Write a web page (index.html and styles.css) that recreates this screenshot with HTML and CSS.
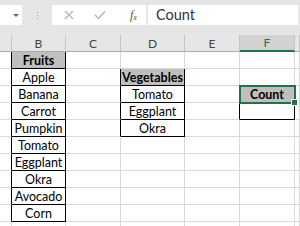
FILE: index.html
```html
<!DOCTYPE html>
<html lang="en">
<head>
    <meta charset="UTF-8">
    <title>Count</title>
    <link rel="stylesheet" href="styles.css">
</head>
<body>
    <div class="formula-bar">
        <div class="name-box"><span class="arrow"></span></div>
        <div class="grip"><i></i><i></i><i></i></div>
        <div class="fx-box">
            <svg class="ico" width="10" height="10" viewBox="0 0 10 10"><path d="M1 1 L9 9 M9 1 L1 9" stroke="#b3b3b3" stroke-width="1.3" fill="none"/></svg>
            <svg class="ico" width="12" height="10" viewBox="0 0 12 10"><path d="M1 5 L4.5 8.5 L11 1.5" stroke="#b3b3b3" stroke-width="1.4" fill="none"/></svg>
            <span class="fx">f<sub>x</sub></span>
        </div>
        <div class="formula">Count</div>
    </div>

    <table class="sheet">
        <tr class="head">
            <th class="w-a"></th>
            <th class="w-b">B</th>
            <th class="w-c">C</th>
            <th class="w-d">D</th>
            <th class="w-e">E</th>
            <th class="w-f active">F</th>
            <th class="w-g"></th>
        </tr>
        <tr>
            <td class="r"></td>
            <td class="r b title">Fruits</td>
            <td></td>
            <td></td>
            <td></td>
            <td></td>
            <td></td>
        </tr>
        <tr>
            <td class="r"></td>
            <td class="r b">Apple</td>
            <td class="r"></td>
            <td class="r b title">Vegetables</td>
            <td></td>
            <td class="b"></td>
            <td></td>
        </tr>
        <tr>
            <td class="r"></td>
            <td class="r b">Banana</td>
            <td class="r"></td>
            <td class="r b">Tomato</td>
            <td class="r"></td>
            <td class="r b title sel">Count</td>
            <td></td>
        </tr>
        <tr>
            <td class="r"></td>
            <td class="r b">Carrot</td>
            <td class="r"></td>
            <td class="r b">Eggplant</td>
            <td class="r"></td>
            <td class="r b"></td>
            <td></td>
        </tr>
        <tr>
            <td class="r"></td>
            <td class="r b">Pumpkin</td>
            <td class="r"></td>
            <td class="r b">Okra</td>
            <td></td>
            <td></td>
            <td></td>
        </tr>
        <tr>
            <td class="r"></td>
            <td class="r b">Tomato</td>
            <td></td>
            <td></td>
            <td></td>
            <td></td>
            <td></td>
        </tr>
        <tr>
            <td class="r"></td>
            <td class="r b">Eggplant</td>
            <td></td>
            <td></td>
            <td></td>
            <td></td>
            <td></td>
        </tr>
        <tr>
            <td class="r"></td>
            <td class="r b">Okra</td>
            <td></td>
            <td></td>
            <td></td>
            <td></td>
            <td></td>
        </tr>
        <tr>
            <td class="r"></td>
            <td class="r b">Avocado</td>
            <td></td>
            <td></td>
            <td></td>
            <td></td>
            <td></td>
        </tr>
        <tr>
            <td class="r"></td>
            <td class="r b">Corn</td>
            <td></td>
            <td></td>
            <td></td>
            <td></td>
            <td></td>
        </tr>
        <tr>
            <td></td>
            <td></td>
            <td></td>
            <td></td>
            <td></td>
            <td></td>
            <td></td>
        </tr>
    </table>
</body>
</html>
```

FILE: styles.css
```css
body {
    margin: 0;
    width: 300px;
    height: 226px;
    overflow: hidden;
    background: #fff;
    font-family: Lato, "Liberation Sans", sans-serif;
}

.formula-bar {
    height: 35px;
    background: #e6e6e6;
    display: flex;
    align-items: flex-start;
    padding-top: 5px;
    box-sizing: border-box;
}

.name-box {
    width: 22px;
    height: 20px;
    background: #fff;
    position: relative;
    display: flex;
    align-items: center;
    justify-content: flex-end;
    padding-right: 3px;
    box-sizing: border-box;
}

.arrow {
    width: 0;
    height: 0;
    border-left: 3px solid transparent;
    border-right: 3px solid transparent;
    border-top: 3px solid #666;
}

.grip {
    width: 30px;
    height: 20px;
    display: flex;
    flex-direction: column;
    align-items: center;
    justify-content: center;
    gap: 2px;
}

.grip i {
    width: 1px;
    height: 1px;
    background: #9a9a9a;
}

.fx-box {
    width: 94px;
    height: 20px;
    background: #fff;
    display: flex;
    align-items: center;
    padding-left: 12px;
    gap: 20px;
    box-sizing: border-box;
}

.fx {
    font-family: "Liberation Serif", serif;
    font-style: italic;
    font-size: 12px;
    color: #555;
    margin-left: 4px;
}

.fx sub {
    font-size: 8px;
    vertical-align: -1px;
}

.formula {
    margin-left: 2px;
    width: 150px;
    height: 20px;
    background: #fff;
    font-size: 14.5px;
    color: #333;
    line-height: 20px;
    padding-left: 8px;
    box-sizing: border-box;
}

.sheet {
    border-collapse: separate;
    border-spacing: 0;
    table-layout: fixed;
    width: 300px;
}

.sheet th,
.sheet td {
    box-sizing: border-box;
    padding: 0;
    border-right: 1px solid #d9d9d9;
    border-bottom: 1px solid #d9d9d9;
    text-align: center;
    white-space: nowrap;
    overflow: hidden;
}

.sheet th {
    height: 16px;
    background: #e6e6e6;
    border-right-color: #c4c4c4;
    border-bottom-color: #ababab;
    font-weight: normal;
    font-size: 12px;
    color: #444;
}

.sheet th.active {
    background: #d2d2d2;
    color: #217346;
    border-bottom: 2px solid #217346;
}

.w-a { width: 12px; }
.w-b { width: 54px; }
.w-c { width: 55px; }
.w-d { width: 64px; }
.w-e { width: 55px; }
.w-f { width: 55px; }
.w-g { width: 5px; }

.sheet td {
    height: 17px;
    font-size: 12.5px;
    color: #000;
}

.sheet td.r { border-right-color: #000; }
.sheet td.b { border-bottom-color: #000; }

.sheet td.title {
    background: #bfbfbf;
    font-weight: bold;
}

.sheet td.sel {
    position: relative;
    overflow: visible;
    outline: 2px solid #217346;
    outline-offset: -1px;
}

.sheet td.sel::after {
    content: "";
    position: absolute;
    right: -4px;
    bottom: -4px;
    width: 5px;
    height: 5px;
    background: #217346;
    border: 1px solid #fff;
}
```
